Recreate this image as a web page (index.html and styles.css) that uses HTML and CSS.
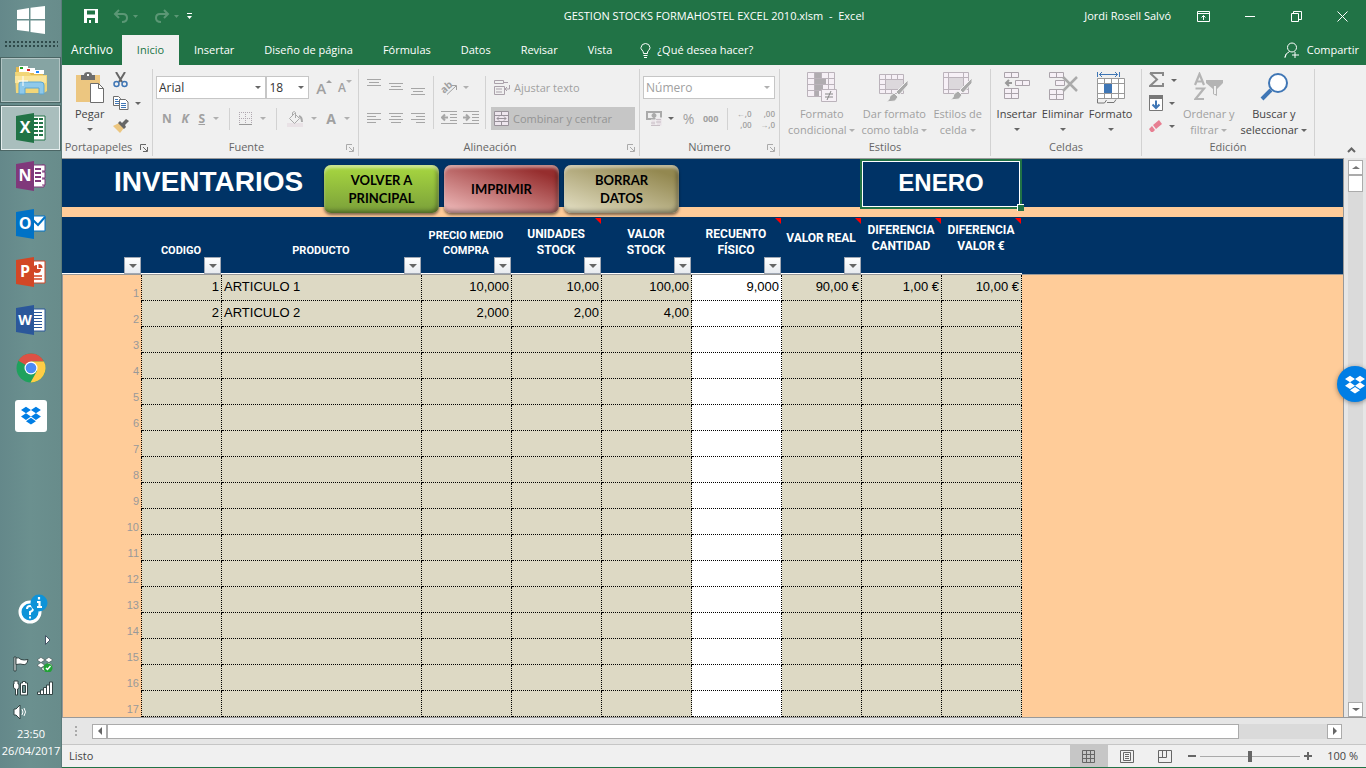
FILE: index.html
```html
<!DOCTYPE html>
<html lang="es">
  <head>
    <meta charset="UTF-8" />
    <meta name="viewport" content="width=device-width, initial-scale=1.0" />
    <title>GESTION STOCKS FORMAHOSTEL EXCEL 2010.xlsm - Excel</title>
    <link rel="stylesheet" href="styles.css">
  </head>

  <body>
    <nav class="taskbar">
      <button class="start" aria-label="Inicio de Windows">
        <svg width="28" height="28" viewBox="0 0 28 28" fill="#fff"><path d="M0 4l12-2v11H0zM13.500 1.700L28 0v13H13.500zM0 14.500h12v11L0 24zM13.500 14.500H28V28l-14.500-2z"/></svg>
      </button>
      <div class="grip"></div>
      <button class="task open" aria-label="Explorador">
        <svg width="34" height="32" viewBox="0 0 34 32"><path d="M2 3h10l2 3h15v22H2z" fill="#e3b94f"/><path d="M5 2h9v6H5z" fill="#fff"/><path d="M6 3h3v2H6z" fill="#1fa31f"/><path d="M12 4h9v5h-9z" fill="#fff"/><path d="M13 5h3v2h-3z" fill="#d22"/><path d="M20 6h10v4H20z" fill="#fff"/><path d="M22 7h3v2h-3z" fill="#28f"/><path d="M1 8h14l2 3h16v16l-3 2H2z" fill="#f2d678"/><path d="M1 12h31v7H1z" fill="#f9e59c"/><path d="M5 30V20q0-2 2-2h20q3 0 3 3v9h-5v-6H11v6z" fill="#8fc9ea" stroke="#5da6d2"/><path d="M9 12v10M4 17h10" stroke="#fff"/></svg>
      </button>
      <button class="task open active" aria-label="Excel">
        <svg width="30" height="30" viewBox="0 0 30 30"><path d="M16 3h13v24H16z" fill="#fff" stroke="#217346"/><path d="M18 6h4M23 6h4M18 10h4M23 10h4M18 14h4M23 14h4M18 18h4M23 18h4M18 22h4M23 22h4" stroke="#217346" stroke-width="2"/><path d="M0 3l18-3v30L0 27z" fill="#217346"/><text x="9" y="20" class="applogo">X</text></svg>
      </button>
      <button class="task" aria-label="OneNote">
        <svg width="30" height="30" viewBox="0 0 30 30"><path d="M16 4h12v22H16z" fill="#fff" stroke="#80397b"/><path d="M19 8h6M19 12h6M19 16h6M19 20h6" stroke="#80397b" stroke-width="2"/><path d="M26 4h3v6h-3M26 11h3v6h-3M26 18h3v6h-3" fill="#fff" stroke="#80397b"/><path d="M0 3l18-3v30L0 27z" fill="#80397b"/><text x="9" y="20" class="applogo">N</text></svg>
      </button>
      <button class="task" aria-label="Outlook">
        <svg width="30" height="30" viewBox="0 0 30 30"><path d="M16 7h13v15H16z" fill="#fff" stroke="#0072c6"/><path d="M17 11l5 5 7-8" fill="none" stroke="#0072c6" stroke-width="2"/><path d="M0 3l18-3v30L0 27z" fill="#0072c6"/><text x="9" y="20" class="applogo">O</text></svg>
      </button>
      <button class="task" aria-label="PowerPoint">
        <svg width="30" height="30" viewBox="0 0 30 30"><path d="M16 4h13v22H16z" fill="#fff" stroke="#d24726"/><path d="M21 8a4 4 0 1 0 4 4h-4z" fill="#d24726"/><path d="M22.500 7a4 4 0 0 1 4 4h-4z" fill="#d24726"/><path d="M18 19h8M18 22h8" stroke="#d24726" stroke-width="1.500"/><path d="M0 3l18-3v30L0 27z" fill="#d24726"/><text x="9" y="20" class="applogo">P</text></svg>
      </button>
      <button class="task" aria-label="Word">
        <svg width="30" height="30" viewBox="0 0 30 30"><path d="M16 4h13v22H16z" fill="#fff" stroke="#2b579a"/><path d="M18 7.500h8M18 10.500h8M18 13.500h8M18 16.500h8M18 19.500h8M18 22.500h8" stroke="#2b579a"/><path d="M0 3l18-3v30L0 27z" fill="#2b579a"/><text x="9" y="20" class="applogo wide-letter">W</text></svg>
      </button>
      <button class="task" aria-label="Chrome">
        <svg width="30" height="30" viewBox="0 0 30 30"><circle cx="15" cy="15" r="14.500" fill="#1fa15d"/><path d="M15 15L2.400 7.700A14.500 14.500 0 0 1 28 8.500H15z" fill="#dd5144"/><path d="M15 8.500h13A14.500 14.500 0 0 1 14.500 29.500L21 18z" fill="#ffcd46"/><circle cx="15" cy="15" r="6.500" fill="#fff"/><circle cx="15" cy="15" r="5.300" fill="#4c8bf5"/></svg>
      </button>
      <button class="task" aria-label="Dropbox">
        <svg width="32" height="32" viewBox="0 0 32 32"><rect width="32" height="32" rx="3" fill="#fff"/><path transform="translate(6 5) scale(.83)" d="M6 2l6 4-6 4-6-4zM18 2l6 4-6 4-6-4zM0 14l6-4 6 4-6 4zM12 14l6-4 6 4-6 4zM6 19.500l6-4 6 4-6 4z" fill="#007ee5"/></svg>
      </button>
      <div class="tray">
        <svg class="help" width="30" height="30" viewBox="0 0 30 30"><circle cx="12" cy="18" r="10" fill="#0e93d8" stroke="#fff" stroke-width="3"/><path d="M9 15q0-3 3-3t3 3q0 2-3 3v3M12 22.500v2" fill="none" stroke="#fff" stroke-width="2"/><circle cx="21" cy="9" r="8.500" fill="#0e93d8"/><path d="M19 8h2.500v5M19 13h5M21 3v2.500" fill="none" stroke="#fff" stroke-width="2.200"/></svg>
        <svg class="more" width="6" height="10" viewBox="0 0 6 10"><path d="M.5.5L5 5 .5 9.500z" fill="#fff" stroke="#456"/></svg>
        <div class="tray-icons">
          <svg width="16" height="16" viewBox="0 0 16 16" fill="#fff" stroke="#344"><path d="M1 1h2v14H1z"/><path d="M3 2q3-1 5 1.500 3 1 7 0-1 6-5 5-2-1-7 0z"/></svg>
          <svg width="16" height="16" viewBox="0 0 16 16"><path transform="scale(.66)" d="M6 2l6 4-6 4-6-4zM18 2l6 4-6 4-6-4zM0 14l6-4 6 4-6 4zM12 14l6-4 6 4-6 4zM6 19.500l6-4 6 4-6 4z" fill="#fff" stroke="#455"/><circle cx="11" cy="12" r="4.500" fill="#21a336"/><path d="M9 12l1.500 1.500L13.500 10" fill="none" stroke="#fff" stroke-width="1.500"/></svg>
          <svg width="16" height="16" viewBox="0 0 16 16" fill="#fff" stroke="#344"><path d="M7.500 3h2V1.500h3V3h2v12h-7z"/><path d="M9.500 5.500h3v7h-3z" fill="#688c8b"/><path d="M1 1v3H.500v3q0 2 2 2v6h2V9q2 0 1.500-2V4H5V1z"/></svg>
          <svg width="16" height="16" viewBox="0 0 16 16" fill="#fff" stroke="#344"><path d="M.5 12h3v2.500h-3zM3.500 10h3v4.500h-3zM6.500 7.500h3v7h-3zM9.500 5h3v9.500h-3zM12.500 2h3v12.500h-3z"/></svg>
          <svg width="16" height="16" viewBox="0 0 16 16" fill="none" stroke="#fff"><path d="M1 5h2l4-4v14l-4-4H1z" fill="#fff" stroke="#344"/><path d="M9 5q2 3 0 6M11 4q3 4 0 8"/></svg>
        </div>
        <div class="clock">23:50</div>
        <div class="clock">26/04/2017</div>
      </div>
    </nav>

    <div class="window">
      <header class="titlebar">
        <div class="quick">
          <button aria-label="Guardar"><svg width="14" height="14" viewBox="0 0 14 14"><path d="M0 0h14v14H0z" fill="#fff"/><path d="M3 1.500h8v4H3zM3 9h8v5H3z" fill="#217346"/><path d="M5 11h2v3H5z" fill="#fff"/></svg></button>
          <button aria-label="Deshacer"><svg width="26" height="14" viewBox="0 0 26 14" fill="none" stroke="#5b9775" stroke-width="2"><path d="M2 5h8q4 0 4 4t-5 4M6 1L2 5l4 4"/><path d="M20 6h5l-2.500 3z" fill="#5b9775" stroke="none"/></svg></button>
          <button aria-label="Rehacer"><svg width="26" height="14" viewBox="0 0 26 14" fill="none" stroke="#5b9775" stroke-width="2"><path d="M14 5H6Q2 5 2 9t5 4M10 1l4 4-4 4"/><path d="M20 6h5l-2.500 3z" fill="#5b9775" stroke="none"/></svg></button>
          <button class="customize" aria-label="Personalizar"><svg width="7" height="8" viewBox="0 0 7 8" fill="#fff"><path d="M1 1h5v1H1zM1 4h5L3.500 7z"/></svg></button>
        </div>
        <h1 class="doc-name">GESTION STOCKS FORMAHOSTEL EXCEL 2010.xlsm&nbsp; - &nbsp;Excel</h1>
        <div class="controls">
          <span class="user">Jordi Rosell Salvó</span>
          <button aria-label="Opciones de cinta"><svg width="13" height="11" viewBox="0 0 13 11" fill="none" stroke="#fff"><path d="M.5.500h12v10H.500zM.5 2.500h12M6.500 9V4.500M4.500 6.500l2-2 2 2"/></svg></button>
          <button aria-label="Minimizar"><svg width="11" height="11" viewBox="0 0 11 11"><path d="M0 5.500h10" stroke="#fff"/></svg></button>
          <button aria-label="Restaurar"><svg width="11" height="11" viewBox="0 0 11 11" fill="none" stroke="#fff"><path d="M.5 2.500h7v8h-7zM2.500 2V.500h8v8H8"/></svg></button>
          <button aria-label="Cerrar"><svg width="11" height="11" viewBox="0 0 11 11"><path d="M.5.500l10 10M10.500.500l-10 10" stroke="#fff"/></svg></button>
        </div>
      </header>

      <nav class="tabs">
        <button class="file">Archivo</button>
        <button class="current">Inicio</button>
        <button>Insertar</button>
        <button>Diseño de página</button>
        <button>Fórmulas</button>
        <button>Datos</button>
        <button>Revisar</button>
        <button>Vista</button>
        <button class="tell">
          <svg width="11" height="15" viewBox="0 0 11 15" fill="none" stroke="#fff"><path d="M3.500 10.500q0-2-1.500-3.500T1 4.500q.5-4 4.500-4t4.500 4Q10 6 8.500 7.500t-1 3zM3.500 12.500h4M4 14.500h3"/></svg>
          ¿Qué desea hacer?
        </button>
        <button class="share">
          <svg width="16" height="16" viewBox="0 0 16 16" fill="none" stroke="#fff"><circle cx="8" cy="5.500" r="4.500"/><path d="M1 15.500q0-4 4.500-6M1 15.500q0-1 1-3M11 10v6M8 13h7"/></svg>
          Compartir
        </button>
      </nav>

      <section class="ribbon">
        <div class="group clipboard">
          <div class="tools">
            <button class="big">
              <svg width="28" height="32" viewBox="0 0 28 32"><path d="M0 3h24v27H0z" fill="#ecc680"/><path d="M5 3h3q0-3 4-3t4 3h3v5H5z" fill="#6d6d6d"/><path d="M11 2h2v2h-2z" fill="#fff"/><path d="M14.500 11.500h8l5 5v14h-13z" fill="#fff" stroke="#6d6d6d"/><path d="M22.500 11.500v5h5" fill="none" stroke="#6d6d6d"/></svg>
              <span>Pegar</span>
              <i class="arrow"></i>
            </button>
            <div class="stack">
              <button aria-label="Cortar"><svg width="15" height="16" viewBox="0 0 15 16" fill="none"><path d="M3 0l6 10M12 0L6 10" stroke="#666" stroke-width="2"/><circle cx="3.500" cy="12" r="2.500" stroke="#3f76b5" stroke-width="1.500"/><circle cx="11.500" cy="12" r="2.500" stroke="#3f76b5" stroke-width="1.500"/></svg></button>
              <button aria-label="Copiar"><svg width="16" height="14" viewBox="0 0 16 14" fill="#fff" stroke="#6d6d6d"><path d="M.5.500h5l2 2v7h-7z"/><path d="M2 3.500h3M2 5.500h4M2 7.500h4" stroke="#3f76b5"/><path d="M6.500 3.500h6l2.500 2.500v7.500H6.500z"/><path d="M8 7.500h5M8 9.500h5M8 11.500h5" stroke="#3f76b5"/></svg><i class="arrow"></i></button>
              <button aria-label="Copiar formato"><svg width="16" height="14" viewBox="0 0 16 14"><path d="M0 7l6-3 5 5-4 5z" fill="#ecc680"/><path d="M5 4l2-2 2 2 4-4 3 2-4 4 1 2-2 2z" fill="#666"/></svg></button>
            </div>
          </div>
          <div class="caption">Portapapeles <svg class="launch" width="8" height="8" viewBox="0 0 8 8"><path d="M.5 6V.500H6M3 3l4 4M7.500 3v4.500H3" fill="none" stroke="currentColor"/></svg></div>
        </div>

        <div class="group font off">
          <div class="tools rows">
            <div class="line">
              <label class="combo family"><input type="text" value="Arial" aria-label="Fuente" /><i class="arrow"></i></label>
              <label class="combo size"><input type="text" value="18" aria-label="Tamaño" /><i class="arrow"></i></label>
              <button class="grow" aria-label="Aumentar">A<i class="up"></i></button>
              <button class="grow small" aria-label="Disminuir">A<i class="arrow"></i></button>
            </div>
            <div class="line marks">
              <button><b>N</b></button>
              <button><b><em>K</em></b></button>
              <button><b><u>S</u></b> <i class="arrow"></i></button>
              <span class="rule"></span>
              <button aria-label="Bordes"><svg width="13" height="13" viewBox="0 0 13 13" fill="none" stroke="#b0a8b0"><path d="M.5 0v12M6.500 0v12M12.500 0v12M0 .5h13M0 6.500h13" stroke-dasharray="1 1"/><path d="M0 12.500h13" stroke="#999"/></svg><i class="arrow"></i></button>
              <span class="rule"></span>
              <button aria-label="Relleno"><svg width="16" height="16" viewBox="0 0 16 16" fill="none" stroke="#aaa"><path d="M0 12h16v4H0z" fill="#e9e2e6" stroke="none"/><path d="M7.500 2.500l5 5-5 5-5-5zM5.500 4V1.500q2-2 3 0V7"/><path d="M12 5q3 1 3 6" stroke-width="2"/></svg><i class="arrow"></i></button>
              <button class="color"><b>A</b><i class="arrow"></i></button>
            </div>
          </div>
          <div class="caption">Fuente <svg class="launch" width="8" height="8" viewBox="0 0 8 8"><path d="M.5 6V.500H6M3 3l4 4M7.500 3v4.500H3" fill="none" stroke="currentColor"/></svg></div>
        </div>

        <div class="group align off">
          <div class="tools split">
            <div class="aligns">
              <button aria-label="Arriba"><svg width="14" height="16" viewBox="0 0 14 16" stroke="#a6a6a6"><path d="M0 .5h14M2 3.500h10M0 6.500h14"/></svg></button>
              <button aria-label="Medio"><svg width="14" height="16" viewBox="0 0 14 16" stroke="#a6a6a6"><path d="M0 4.500h14M2 7.500h10M0 10.500h14"/></svg></button>
              <button aria-label="Abajo"><svg width="14" height="16" viewBox="0 0 14 16" stroke="#a6a6a6"><path d="M0 9.500h14M2 12.500h10M0 15.500h14"/></svg></button>
              <button aria-label="Izquierda"><svg width="14" height="16" viewBox="0 0 14 16" stroke="#a6a6a6"><path d="M0 3.500h14M0 6.500h9M0 9.500h14M0 12.500h9"/></svg></button>
              <button aria-label="Centro"><svg width="14" height="16" viewBox="0 0 14 16" stroke="#a6a6a6"><path d="M0 3.500h14M2 6.500h10M0 9.500h14M2 12.500h10"/></svg></button>
              <button aria-label="Derecha"><svg width="14" height="16" viewBox="0 0 14 16" stroke="#a6a6a6"><path d="M0 3.500h14M5 6.500h9M0 9.500h14M5 12.500h9"/></svg></button>
            </div>
            <div class="indents">
              <button aria-label="Orientación" class="wide"><svg class="tilt" width="17" height="15" viewBox="0 0 17 15" fill="none" stroke="#a0a0a0"><text x="0" y="12" transform="rotate(-42 4 9)" class="ab">ab</text><path d="M6 14.500L15 6M11 5.500h4.500V10"/></svg><i class="arrow"></i></button>
              <button aria-label="Menos sangría"><svg width="16" height="14" viewBox="0 0 16 14" fill="none" stroke="#a6a6a6"><path d="M0 .5h16M9 3.500h7M9 6.500h7M9 9.500h7M0 12.500h16"/><path d="M1 6.500h6M4 3.500l-3 3 3 3" stroke-width="2"/></svg></button>
              <button aria-label="Más sangría"><svg width="16" height="14" viewBox="0 0 16 14" fill="none" stroke="#a6a6a6"><path d="M0 .5h16M9 3.500h7M9 6.500h7M9 9.500h7M0 12.500h16"/><path d="M0 6.500h6M3 3.500l3 3-3 3" stroke-width="2"/></svg></button>
            </div>
            <div class="wraps">
              <button><svg width="16" height="15" viewBox="0 0 16 15" fill="none" stroke="#aaa1aa"><path d="M.5.500h9v3h-9zM9.500 2.500H14M.5 6.500h10v8H.500zM2 9h6M2 12h6M15.500 5v4h-4M13 7l-2 2 2 2"/></svg>Ajustar texto</button>
              <button class="merged"><svg width="15" height="15" viewBox="0 0 15 15" fill="#eee6ee" stroke="#99929a"><path d="M.5.500h14v14H.500zM.5 4.500h14M.5 10.500h14M7.500.500v4M7.500 10.500v4"/><path d="M3 7.500h9M5 5.500l-2 2 2 2M10 5.500l2 2-2 2" fill="none"/></svg>Combinar y centrar</button>
            </div>
          </div>
          <div class="caption">Alineación <svg class="launch" width="8" height="8" viewBox="0 0 8 8"><path d="M.5 6V.500H6M3 3l4 4M7.500 3v4.500H3" fill="none" stroke="currentColor"/></svg></div>
        </div>

        <div class="group number off">
          <div class="tools rows">
            <div class="line">
              <label class="combo format"><input type="text" value="Número" aria-label="Formato de número" /><i class="arrow"></i></label>
            </div>
            <div class="line figures">
              <button class="money" aria-label="Moneda"><svg width="17" height="16" viewBox="0 0 17 16" fill="none" stroke="#aaa"><path d="M1 1h14v7H1z" fill="#eee" stroke-width="2"/><circle cx="8" cy="4.500" r="2" fill="#aaa"/><path d="M5 9h5v6H5zM10 7h6v8h-6z" fill="#e8e0e6" stroke="#f0f0f0"/><path d="M10 8.500h5M10 11h5M5 12h4M5 14.500h9" stroke="#c8c0c6"/></svg><i class="arrow"></i></button>
              <button class="percent">%</button>
              <button class="zeros"><b>000</b></button>
              <span class="rule"></span>
              <button class="dec"><span>←,0</span><span>,00</span></button>
              <button class="dec"><span>,00</span><span>→,0</span></button>
            </div>
          </div>
          <div class="caption">Número <svg class="launch" width="8" height="8" viewBox="0 0 8 8"><path d="M.5 6V.500H6M3 3l4 4M7.500 3v4.500H3" fill="none" stroke="currentColor"/></svg></div>
        </div>

        <div class="group styles off">
          <div class="tools">
            <button class="big">
              <svg width="32" height="32" viewBox="0 0 32 32" fill="#f6f0f6" stroke="#bbb3bb"><path d="M1.500.500h27v24h-27zM1.500 6.500h27M1.500 12.500h27M1.500 18.500h27M8.500.500v24M15.500.500v24M22.500.500v24"/><path d="M9 1h6v5H9zM9 7h11v5H9zM9 13h8v5H9zM9 19h4v5H9z" fill="#b0acb0" stroke="none"/><path d="M15.500 17.500h15v12h-15z"/><path d="M19 22h8M19 25h8M25 19l-4 9" stroke="#888"/></svg>
              <span>Formato<br />condicional <i class="arrow"></i></span>
            </button>
            <button class="big">
              <svg width="32" height="32" viewBox="0 0 32 32" fill="#f6f0f6" stroke="#bbb3bb"><path d="M1.500 2.500h24v19h-24zM1.500 7.500h24M1.500 12.500h24M1.500 17.500h24M7.500 2.500v19M13.500 2.500v19M19.500 2.500v19"/><path d="M8 8h17v9H8z" fill="#dcd8dc" stroke="none"/><path d="M30 8v5l-9 10-3-3zM16 21l4 4-3 4-9 1q4-2 4-6z" fill="#aaa" stroke="#f0f0f0"/></svg>
              <span>Dar formato<br />como tabla <i class="arrow"></i></span>
            </button>
            <button class="big">
              <svg width="32" height="32" viewBox="0 0 32 32" fill="#f6f0f6" stroke="#bbb3bb"><path d="M1.500.500h25v21h-25zM1.500 5.500h25M1.500 17.500h25M6.500.500v21M21.500.500v21"/><path d="M7 6h14v11H7z" fill="#dcd8dc" stroke="none"/><path d="M30 6v5l-9 10-3-3zM16 19l4 4-3 4-9 1q4-2 4-6z" fill="#aaa" stroke="#f0f0f0"/></svg>
              <span>Estilos de<br />celda <i class="arrow"></i></span>
            </button>
          </div>
          <div class="caption">Estilos</div>
        </div>

        <div class="group cells">
          <div class="tools">
            <button class="big">
              <svg width="28" height="32" viewBox="0 0 28 32" fill="#f6f0f6" stroke="#aaa3aa"><path d="M1.500.500h14v5h-14zM8.500.500v5M12.500 8.500h14v5h-14zM19.500 8.500v5M1.500 16.500h14v10h-14zM1.500 21.500h14M8.500 16.500v10"/><path d="M3 11h6M6 8l-3 3 3 3" stroke="#999" stroke-width="2" fill="none"/></svg>
              <span>Insertar</span>
              <i class="arrow"></i>
            </button>
            <button class="big">
              <svg width="30" height="32" viewBox="0 0 30 32" fill="#f6f0f6" stroke="#aaa3aa"><path d="M1.500.500h14v5h-14zM8.500.500v5M7.500 8.500h9v5h-9zM1.500 17.500h14v10h-14zM1.500 22.500h14M8.500 17.500v10"/><path d="M15 5l14 14M29 5L15 19" stroke="#aaa" stroke-width="2.500"/></svg>
              <span>Eliminar</span>
              <i class="arrow"></i>
            </button>
            <button class="big">
              <svg width="30" height="32" viewBox="0 0 30 32" fill="#fff" stroke="#777"><path d="M1.500 6.500h27v20h-27zM1.500 11.500h27M1.500 21.500h27M8.500 6.500v20M15.500 6.500v20M22.500 6.500v20" stroke="#999"/><path d="M1.500 27v4h7l2-3M11 30.500h7l2-3" fill="none"/><path d="M8 12h8v9H8z" fill="#3f76b5" stroke="none"/><path d="M1.500 0v5M23.500 0v5M3 2.500h19M6 0L3.500 2.500 6 5M19 0l2.500 2.500L19 5" stroke="#3f76b5" fill="none"/></svg>
              <span>Formato</span>
              <i class="arrow"></i>
            </button>
          </div>
          <div class="caption">Celdas</div>
        </div>

        <div class="group edit">
          <div class="tools">
            <div class="stack">
              <button aria-label="Autosuma"><svg width="16" height="16" viewBox="0 0 16 16"><path d="M1 1h13v3M1 1l7 6.500L1 14h13v-3" fill="none" stroke="#888" stroke-width="2"/></svg><i class="arrow"></i></button>
              <button aria-label="Rellenar"><svg width="14" height="16" viewBox="0 0 14 16"><path d="M.5.500h13v15H.500z" fill="#fff" stroke="#777"/><path d="M0 0h14v4H0z" fill="#777"/><path d="M7 5.500v7M3.500 9.500L7 13l3.500-3.500" fill="none" stroke="#3f76b5" stroke-width="2"/></svg><i class="arrow"></i></button>
              <button aria-label="Borrar"><svg width="14" height="13" viewBox="0 0 14 13"><path d="M4 5l6-5 3 4-6 5zM0 9l3-3 3 4-2 2H2z" fill="#e77f92"/></svg><i class="arrow"></i></button>
            </div>
            <button class="big dim">
              <svg width="30" height="32" viewBox="0 0 30 32"><path d="M1 13L5.500 2 10 13M3 9.500h5M1.500 16.500H10L1.500 27H10" fill="none" stroke="#b4b4b4" stroke-width="2.200"/><path d="M12 8h17v3l-6 6v7l-4-2v-5l-7-6z" fill="#b4b4b4"/><path d="M20 14h2v8h-2z" fill="#f0f0f0"/></svg>
              <span>Ordenar y<br />filtrar <i class="arrow"></i></span>
            </button>
            <button class="big">
              <svg width="30" height="32" viewBox="0 0 30 32"><path d="M3 27l9-9" stroke="#3f76b5" stroke-width="4"/><circle cx="19" cy="11" r="9" fill="#fff" stroke="#3f76b5" stroke-width="2"/></svg>
              <span>Buscar y<br />seleccionar <i class="arrow"></i></span>
            </button>
          </div>
          <div class="caption">Edición</div>
        </div>

        <button class="collapse" aria-label="Contraer cinta"><svg width="9" height="6" viewBox="0 0 9 6"><path d="M1 5l3.500-3.500L8 5" fill="none" stroke="#666" stroke-width="2"/></svg></button>
      </section>

      <main class="workspace">
        <div class="sheet">
          <div class="banner">
            <h2>INVENTARIOS</h2>
            <div class="macros">
              <button class="macro green">VOLVER A PRINCIPAL</button>
              <button class="macro red">IMPRIMIR</button>
              <button class="macro tan">BORRAR DATOS</button>
            </div>
            <div class="month">ENERO</div>
          </div>

          <table>
            <colgroup>
              <col class="w80" /><col class="w80" /><col class="w200" />
              <col class="w90" /><col class="w90" /><col class="w90" /><col class="w90" />
              <col class="w80" /><col class="w80" /><col class="w80" /><col />
            </colgroup>
            <thead>
              <tr>
                <th><button class="filter" aria-label="Filtrar"></button></th>
                <th class="low">CODIGO<button class="filter" aria-label="Filtrar"></button></th>
                <th class="low">PRODUCTO<button class="filter" aria-label="Filtrar"></button></th>
                <th class="low">PRECIO MEDIO<br />COMPRA<button class="filter" aria-label="Filtrar"></button></th>
                <th class="note">UNIDADES<br />STOCK<button class="filter" aria-label="Filtrar"></button></th>
                <th>VALOR<br />STOCK<button class="filter" aria-label="Filtrar"></button></th>
                <th class="note">RECUENTO<br />FÍSICO<button class="filter" aria-label="Filtrar"></button></th>
                <th class="note high">VALOR REAL<button class="filter" aria-label="Filtrar"></button></th>
                <th class="note high">DIFERENCIA<br />CANTIDAD</th>
                <th class="note high">DIFERENCIA<br />VALOR €</th>
                <th class="rest"></th>
              </tr>
            </thead>
            <tbody id="rows">
              <tr><th>1</th><td>1</td><td>ARTICULO 1</td><td>10,000</td><td>10,00</td><td>100,00</td><td>9,000</td><td>90,00 €</td><td>1,00 €</td><td>10,00 €</td></tr>
              <tr><th>2</th><td>2</td><td>ARTICULO 2</td><td>2,000</td><td>2,00</td><td>4,00</td><td></td><td></td><td></td><td></td></tr>
            </tbody>
          </table>
        </div>
        <div class="vscroll">
          <button aria-label="Subir"><i class="up"></i></button>
          <div class="thumb"></div>
          <button class="last" aria-label="Bajar"><i class="arrow"></i></button>
        </div>
      </main>

      <div class="hscroll">
        <span class="dots"></span>
        <button aria-label="Izquierda"><i class="left"></i></button>
        <div class="track"><div class="thumb"></div></div>
        <button aria-label="Derecha"><i class="right"></i></button>
      </div>

      <footer class="status">
        <span class="ready">Listo</span>
        <button class="view on" aria-label="Normal"><svg width="14" height="13" viewBox="0 0 14 13" fill="none" stroke="#666"><path d="M.5.500h12v12H.500zM.5 4.500h12M.5 8.500h12M4.500.500v12M8.500.500v12"/></svg></button>
        <button class="view" aria-label="Diseño de página"><svg width="14" height="13" viewBox="0 0 14 13" fill="none" stroke="#666"><path d="M.5.500h13v12H.500zM3.500 2.500h7v8h-7zM5 4.500h4M5 6.500h4M5 8.500h4"/></svg></button>
        <button class="view" aria-label="Salto de página"><svg width="14" height="13" viewBox="0 0 14 13" fill="none" stroke="#666"><path d="M.5.500h13v12H.500zM.5 7.500h8M4.500.500v7M8.500.500v7"/></svg></button>
        <button class="step minus" aria-label="Alejar"></button>
        <input class="zoom" type="range" min="0" max="100" value="50" aria-label="Zoom" />
        <button class="step plus" aria-label="Acercar"></button>
        <span class="percentage">100 %</span>
      </footer>
    </div>

    <button class="dropbox" aria-label="Dropbox">
      <svg width="20" height="20" viewBox="0 0 24 24"><path d="M6 2l6 4-6 4-6-4zM18 2l6 4-6 4-6-4zM0 14l6-4 6 4-6 4zM12 14l6-4 6 4-6 4zM6 19.500l6-4 6 4-6 4z" fill="#fff"/></svg>
    </button>

    <script>
      const rows = document.getElementById("rows");

      // empty rows still waiting for an article
      for (let i = 3; i <= 17; i++) {
        const tr = document.createElement("tr");
        tr.innerHTML = `<th>${i}</th>` + "<td></td>".repeat(9);
        rows.appendChild(tr);
      }
    </script>
  </body>
</html>
```

FILE: styles.css
```css
* {
  margin: 0;
  padding: 0;
  box-sizing: border-box;
}

body {
  display: flex;
  height: 100vh;
  overflow: hidden;
  font-family: "Open Sans", sans-serif;
  font-size: 11px;
  line-height: 16px;
  color: #444;
}

button {
  display: flex;
  align-items: center;
  justify-content: center;
  background: none;
  border: none;
  font: inherit;
  color: inherit;
  white-space: nowrap;
}

svg {
  display: block;
  flex: none;
}

/* small triangles */
.arrow,
.up,
.left,
.right {
  display: inline-block;
  flex: none;
  border: 3px solid transparent;
}

.arrow {
  border-top-color: #666;
  border-bottom: none;
}

.up {
  border-bottom-color: #777;
  border-top: none;
}

.left {
  border: 4px solid transparent;
  border-right-color: #666;
  border-left: none;
}

.right {
  border: 4px solid transparent;
  border-left-color: #666;
  border-right: none;
}

/* taskbar */
.taskbar {
  display: flex;
  flex-direction: column;
  align-items: center;
  width: 62px;
  flex: none;
  background: linear-gradient(to right, #64888a, #6b908f 50%, #688c8b);
  border-right: 1px solid #5b7b7a;
  color: #fff;
}

.start {
  height: 40px;
}

.grip {
  width: 54px;
  height: 8px;
  margin-bottom: 9px;
  background: radial-gradient(circle, #2f4a4a 1px, transparent 1px) 0 0 / 4px 4px;
}

.task {
  width: 100%;
  height: 46px;
  margin-bottom: 2px;
}

.task.open {
  background: #86a4a3;
  border: 1px solid #4b6665;
  box-shadow: inset 0 0 0 1px #b1c4c3;
}

.task.active {
  background: #a9bebd;
  box-shadow: inset 0 0 0 1px #e6eeee;
}

.applogo {
  font: bold 16px "Open Sans", sans-serif;
  fill: #fff;
  text-anchor: middle;
}

.wide-letter {
  font-size: 14px;
}

.tray {
  display: flex;
  flex-direction: column;
  align-items: center;
  width: 100%;
  margin-top: auto;
  padding: 0 0 9px 1px;
}

.help {
  margin: 0 0 11px 4px;
}

.more {
  align-self: flex-end;
  margin: 0 10px 11px 0;
}

.tray-icons {
  display: grid;
  grid-template-columns: 16px 16px;
  gap: 8px;
  margin: 0 0 5px 3px;
}

.clock {
  line-height: 17px;
}

/* window */
.window {
  display: flex;
  flex-direction: column;
  flex: 1;
  min-width: 0;
  background: #f0f0f0;
  border-bottom: 1px solid #217346;
}

.titlebar {
  display: grid;
  grid-template-columns: 1fr auto 1fr;
  align-items: center;
  height: 35px;
  padding-bottom: 3px;
  background: #217346;
  color: #fff;
}

.quick {
  display: flex;
  gap: 15px;
  padding-left: 22px;
}

.quick .customize {
  margin-left: -9px;
}

.quick svg {
  flex: none;
}

.quick button + button {
  margin-left: 0;
}

.doc-name {
  font-size: 11px;
  font-weight: normal;
}

.controls {
  display: flex;
  align-items: center;
  justify-content: flex-end;
  gap: 35px;
  padding-right: 18px;
}

.user {
  margin-right: -9px;
}

.tabs {
  display: flex;
  height: 30px;
  background: #217346;
  color: #fff;
}

.tabs button {
  padding: 0 15px;
}

.tabs .file {
  width: 60px;
  padding: 0;
  font-size: 12px;
}

.tabs .current {
  width: 57px;
  padding: 0;
  background: #f0f0f0;
  color: #217346;
}

.tabs .tell {
  gap: 6px;
  padding: 0 13px;
}

.tabs .share {
  gap: 7px;
  margin-left: auto;
  padding-right: 7px;
}

/* ribbon */
.ribbon {
  display: flex;
  height: 93px;
  padding-top: 4px;
}

.group {
  display: flex;
  flex-direction: column;
  height: 87px;
  padding-bottom: 1px;
  border-right: 1px solid #d2d2d2;
}

.clipboard {
  width: 91px;
}

.font {
  width: 206px;
}

.align {
  width: 281px;
}

.number {
  width: 140px;
}

.styles {
  width: 211px;
}

.cells {
  width: 151px;
}

.edit {
  width: 173px;
}

.tools {
  display: flex;
  flex: 1;
  justify-content: center;
}

.tools.rows {
  flex-direction: column;
  justify-content: flex-start;
  gap: 8px;
  padding: 7px 4px 0 3px;
}

.caption {
  position: relative;
  text-align: center;
  color: #666;
}

.font .caption,
.align .caption {
  padding-right: 18px;
}

.clipboard .caption {
  padding-right: 17px;
}

.launch {
  position: absolute;
  right: 4px;
  bottom: 3px;
}

.off .launch {
  color: #aaa;
}

.big {
  flex-direction: column;
  justify-content: flex-start;
  padding-top: 3px;
  text-align: center;
}

.big svg {
  margin-bottom: 2px;
}

.big > .arrow {
  margin-top: 6px;
}

.big span .arrow {
  margin-bottom: 2px;
}

.off,
.dim {
  color: #a0a0a0;
}

.off .arrow,
.dim .arrow {
  border-top-color: #b0b0b0;
}

.stack {
  display: flex;
  flex-direction: column;
  gap: 7px;
  padding-top: 3px;
}

.stack button {
  justify-content: flex-start;
  gap: 6px;
  height: 16px;
}

.clipboard .tools {
  justify-content: flex-start;
  gap: 9px;
  padding-left: 13px;
}

.line {
  display: flex;
  align-items: center;
  height: 23px;
}

.combo {
  display: flex;
  align-items: center;
  height: 23px;
  padding-right: 4px;
  background: #fff;
  border: 1px solid #c6c6c6;
}

.combo input {
  width: 100%;
  min-width: 0;
  padding-left: 2px;
  border: none;
  background: none;
  font: inherit;
  font-size: 12px;
  color: #333;
}

.family {
  width: 111px;
}

.size {
  width: 43px;
}

.font .combo .arrow,
.money .arrow {
  border-top-color: #666;
}

.format {
  width: 100%;
}

.format input {
  color: #a0a0a0;
}

.grow {
  align-items: center;
  width: 24px;
  margin-left: 3px;
  font-size: 15px;
  font-weight: 600;
}

.grow i {
  margin-bottom: 12px;
}

.grow.small {
  width: 18px;
  margin-left: 0;
  font-size: 12px;
}

.grow .up {
  border-bottom-color: #a0a0a0;
}

.marks {
  justify-content: space-between;
  padding: 0 4px 0 6px;
}

.marks button {
  gap: 8px;
  font-size: 12px;
}

.marks .color {
  font-size: 14px;
}

.rule {
  width: 1px;
  height: 22px;
  background: #d2d2d2;
}

.tools.split {
  justify-content: flex-start;
}

.aligns {
  display: grid;
  grid-template-columns: repeat(3, 14px);
  column-gap: 8px;
  row-gap: 15px;
  align-content: start;
  padding: 10px 8px 0 8px;
}

.indents {
  display: grid;
  grid-template-columns: 16px 16px;
  grid-template-rows: 22px 22px;
  gap: 9px 6px;
  align-self: start;
  margin-top: 7px;
  padding: 0 6px 0 7px;
  border-left: 1px solid #d2d2d2;
  border-right: 1px solid #d2d2d2;
}

.wide {
  grid-column: span 2;
  justify-content: flex-start;
  gap: 5px;
}

.tilt {
  overflow: visible;
}

.ab {
  font: bold 10px "Open Sans", sans-serif;
  fill: #a0a0a0;
  stroke: none;
}

.wraps {
  display: flex;
  flex: 1;
  flex-direction: column;
  gap: 8px;
  padding: 7px 4px 0 5px;
}

.wraps button {
  justify-content: flex-start;
  gap: 4px;
  height: 23px;
  padding-left: 3px;
}

.wraps .merged {
  background: #c6c6c6;
  color: #949494;
}

.figures {
  justify-content: space-between;
}

.figures button {
  gap: 5px;
}

.figures .money {
  padding-left: 3px;
}

.percent {
  font-size: 14px;
}

.zeros {
  font-size: 9px;
}

.figures .dec {
  flex-direction: column;
  align-items: flex-end;
  gap: 0;
  font-size: 8px;
  font-weight: 600;
  line-height: 11px;
}

.styles .tools {
  gap: 6px;
}

.cells .tools {
  gap: 5px;
  padding-right: 3px;
}

.edit .tools {
  gap: 6px;
}

.collapse {
  margin: auto 10px 5px auto;
}

/* worksheet */
.workspace {
  display: flex;
  flex: 1;
  min-height: 0;
  background: #e6e6e6;
}

.sheet {
  flex: 1;
  min-width: 0;
  overflow: hidden;
  background: #ffcc99;
  border: solid #999;
  border-width: 1px 1px 0 0;
  font-family: "Liberation Sans", Arial, sans-serif;
  box-shadow: inset 1px 0 #999;
}

.banner {
  display: flex;
  height: 58px;
  background: #003366;
  border-bottom: 10px solid #ffcc99;
  color: #fff;
}

.banner h2 {
  width: 262px;
  padding-left: 52px;
  font-size: 28px;
  line-height: 46px;
}

.macros {
  display: flex;
  gap: 5px;
  padding-top: 6px;
}

.macro {
  width: 115px;
  height: 48px;
  padding: 0 20px;
  border-radius: 7px;
  box-shadow: inset 0 3px 3px rgba(255, 255, 255, 0.45), inset -2px -2px 4px rgba(0, 0, 0, 0.4), 0 2px 3px rgba(0, 0, 0, 0.5);
  font: bold 13px/18px Lato, sans-serif;
  color: #000;
  white-space: normal;
}

.green {
  background: linear-gradient(#a8d840, #7a9f3a);
}

.red {
  background: linear-gradient(200deg, #962e2e 15%, #e6adad 90%);
}

.tan {
  background: linear-gradient(200deg, #938850 15%, #dbd6b8 90%);
}

.month {
  width: 162px;
  height: 50px;
  margin-left: 181px;
  border: 2px solid #217346;
  box-shadow: inset 0 0 0 1px #fff;
  font-size: 24px;
  font-weight: bold;
  line-height: 44px;
  text-align: center;
  position: relative;
}

/* fill handle of the selected cell */
.month::after {
  content: "";
  position: absolute;
  right: -4px;
  bottom: -4px;
  width: 6px;
  height: 6px;
  background: #217346;
  border: solid #fff;
  border-width: 1px 0 0 1px;
}

table {
  width: 100%;
  table-layout: fixed;
  border-spacing: 0;
}

.w80 {
  width: 80px;
}

.w90 {
  width: 90px;
}

.w200 {
  width: 200px;
}

thead th {
  position: relative;
  height: 58px;
  padding: 0 2px 8px 0;
  background: #003366;
  border-bottom: 1px solid #999;
  box-shadow: inset 0 -1px #fff;
  font: bold 12px/16px Roboto, sans-serif;
  color: #fff;
}

thead .low {
  padding-bottom: 16px;
  font-size: 11px;
  line-height: 15px;
  vertical-align: bottom;
}

thead .high {
  padding-bottom: 16px;
}

thead .rest {
  box-shadow: none;
}

.note::after {
  content: "";
  position: absolute;
  top: 1px;
  right: 1px;
  border: 3px solid #f00;
  border-left-color: transparent;
  border-bottom-color: transparent;
}

.filter {
  position: absolute;
  right: 1px;
  bottom: 0;
  width: 17px;
  height: 17px;
  background: linear-gradient(#fff, #e8ebf0);
  border: 1px solid #a0a8b4;
}

.filter::before {
  content: "";
  border: 4px solid transparent;
  border-top-color: #666;
  border-bottom: none;
}

tbody td {
  height: 26px;
  padding: 0 2px 1px;
  background: #ddd9c4;
  border: dotted #000;
  border-width: 0 1px 1px 0;
  font-size: 13px;
  color: #000;
  text-align: right;
}

tbody td:nth-child(3) {
  text-align: left;
}

/* physical count is the column the user fills in */
tbody td:nth-child(7) {
  background: #fff;
}

tbody th {
  padding: 10px 2px 0;
  border-right: 1px dotted #000;
  font-size: 11px;
  font-weight: normal;
  color: #999;
  text-align: right;
}

/* scrollbars */
.vscroll {
  display: flex;
  flex-direction: column;
  width: 15px;
  margin: 2px 3px 0 4px;
  background: #dadada;
}

.vscroll button,
.hscroll button {
  width: 15px;
  height: 15px;
  background: #fff;
  border: 1px solid #ababab;
}

.vscroll .up,
.vscroll .arrow {
  border-left-width: 4px;
  border-right-width: 4px;
}

.vscroll .thumb {
  height: 17px;
  background: #fff;
  border: 1px solid #ababab;
}

.vscroll .last {
  margin-top: auto;
}

.hscroll {
  display: flex;
  align-items: center;
  height: 28px;
  padding: 0 24px 0 13px;
  background: #e6e6e6;
  border-top: 1px solid #999;
  border-bottom: 1px solid #c6c6c6;
}

.dots {
  width: 2px;
  height: 10px;
  margin-right: 15px;
  background: repeating-linear-gradient(#aaa 0 2px, transparent 2px 4px);
}

.track {
  flex: 1;
  background: #dadada;
}

.track .thumb {
  height: 15px;
  margin-right: 88px;
  background: #fff;
  border: 1px solid #ababab;
}

/* status bar */
.status {
  display: flex;
  align-items: center;
  height: 22px;
}

.ready {
  margin: 0 auto 0 7px;
}

.view {
  width: 38px;
  height: 22px;
}

.view.on {
  background: #c6c6c6;
}

.step {
  width: 8px;
  height: 8px;
  background: linear-gradient(#666, #666) center / 8px 2px no-repeat;
}

.step.plus {
  background: linear-gradient(#666, #666) center / 8px 2px no-repeat, linear-gradient(#666, #666) center / 2px 8px no-repeat;
}

.minus {
  margin-left: 4px;
}

.zoom {
  width: 100px;
  height: 12px;
  margin: 0 4px;
  appearance: none;
  background: linear-gradient(#aaa, #aaa) center / 100% 1px no-repeat;
}

.zoom::-webkit-slider-thumb {
  appearance: none;
  width: 4px;
  height: 11px;
  background: #666;
}

.percentage {
  width: 54px;
  padding-right: 8px;
  text-align: right;
}

/* floating badge over the right edge */
.dropbox {
  position: fixed;
  top: 366px;
  right: -7px;
  width: 36px;
  height: 36px;
  border-radius: 50%;
  background: #007ee5;
  box-shadow: 0 1px 5px rgba(0, 0, 0, 0.4);
}
```
